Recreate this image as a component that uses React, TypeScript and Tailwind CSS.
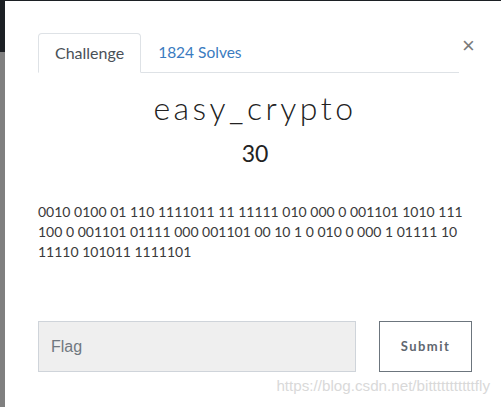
import React from "react";

export default function App() {
  return (
    <div className="flex w-[501px] h-[407px] overflow-hidden bg-white" style={{ fontFamily: "Lato, 'Open Sans', sans-serif" }}>
      <div className="flex flex-col w-[5px] shrink-0">
        <div className="h-[52px] bg-[#1c2024]" />
        <div className="flex-1 bg-[#808080]" />
      </div>
      <div className="flex-1 flex flex-col border-t border-[#1c2024] bg-white relative">
        <button className="absolute left-[457px] top-[34px] text-[22px] leading-none text-[#7a7a7a]" style={{ fontFamily: "'Liberation Sans', Arial, sans-serif" }}>
          ×
        </button>
        <div className="pl-[33px] pr-[46px] pt-[32px]">
          <div className="flex h-[40px] border-b border-[#dee2e6]">
            <div className="h-[40px] -mb-px px-4 flex items-center border border-[#dee2e6] border-b-white rounded-t-[4px] bg-white text-[16px] text-[#495057]">
              Challenge
            </div>
            <div className="h-[40px] px-[17px] flex items-center text-[15.5px] text-[#3a7bc0]">
              1824 Solves
            </div>
          </div>
        </div>
        <div className="px-[33px]">
          <div className="mt-[15px] text-center text-[32px] leading-[40px] font-light tracking-[3.5px] text-[#222]">
            easy_crypto
          </div>
          <div className="mt-[11px] text-center text-[23px] leading-[28px] text-[#222]">
            30
          </div>
          <div className="mt-[35px] text-[14px] leading-[20px] text-[#3a3a3a]">
            0010 0100 01 110 1111011 11 11111 010 000 0 001101 1010 111 100 0 001101 01111 000 001101 00 10 1 0 010 0 000 1 01111 10 11110 101011 1111101
          </div>
          <div className="mt-[59px] flex items-start">
            <div
              className="w-[318px] h-[51px] border border-[#cfd4da] bg-[#efefef] flex items-center pl-[12px] text-[16px] text-[#707880]"
              style={{ fontFamily: "'Liberation Sans', Arial, sans-serif" }}
            >
              Flag
            </div>
            <div className="ml-[23px] w-[93px] h-[51px] border border-[#6c757d] flex items-center justify-center text-[13px] font-bold tracking-[1.5px] text-[#5f6770]">
              Submit
            </div>
          </div>
          <div
            className="mt-[4px] text-right mr-[-18px] text-[15.2px] leading-[20px] text-[#d9d9d9]"
            style={{ fontFamily: "'Liberation Sans', Arial, sans-serif" }}
          >
            https://blog.csdn.net/bitttttttttttfly
          </div>
        </div>
      </div>
    </div>
  );
}
